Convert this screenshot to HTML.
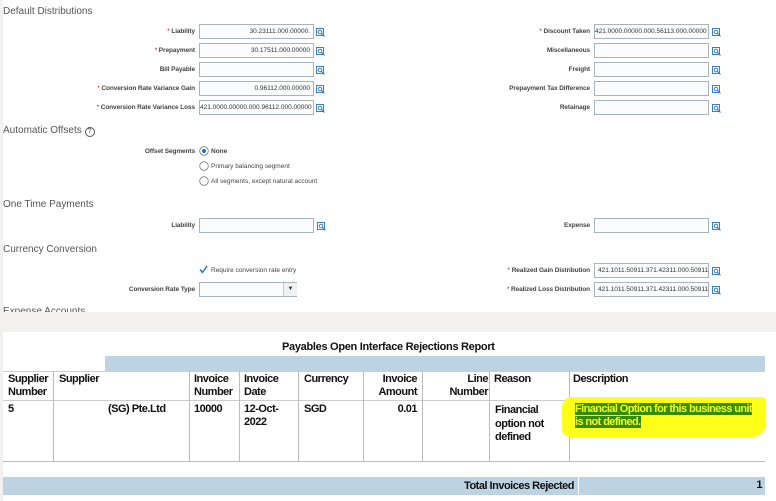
<!DOCTYPE html>
<html><head><meta charset="utf-8"><style>
*{margin:0;padding:0;box-sizing:border-box}
body{width:776px;height:501px;overflow:hidden;background:#fff;font-family:"Liberation Sans",Arial,sans-serif;position:relative;color:#333}
.a{position:absolute;white-space:nowrap}
.h{font-size:10px;color:#555}
.l{font-size:6.5px;color:#444;text-align:right;width:190px;font-weight:bold;letter-spacing:-0.1px}
.l b{color:#c00;font-weight:normal}
.in{position:absolute;height:15px;border:1px solid #a8b4bd;background:#fbfcfd;font-size:6.5px;color:#333;text-align:right;padding:3px 3px 0 0;overflow:hidden}
.ic{position:absolute;width:9px;height:9px}
.strip{position:absolute;left:0;top:0;width:3px;height:312px;background:#f2f1ef}
.rt{font-size:11px;color:#111;letter-spacing:-0.5px}
</style></head><body>
<div class="strip"></div>
<div class="a h" style="left:3px;top:6px">Default Distributions</div>

<svg width="0" height="0" style="position:absolute"><defs><symbol id="mg" viewBox="0 0 9 9"><rect x="0.5" y="0.5" width="7" height="7" fill="none" stroke="#3a7fc4"/><circle cx="4" cy="4" r="1.8" fill="none" stroke="#3a7fc4"/><path d="M5.3 5.3L8.5 8.5" stroke="#3a7fc4" stroke-width="1.2"/></symbol></defs></svg>

<div class="a l" style="left:5px;top:28px"><b>*</b> Liability</div>
<div class="in" style="left:199px;top:24px;width:115px">30.23111.000.00000.</div>
<svg class="ic" style="left:316px;top:28px"><use href="#mg"/></svg>
<div class="a l" style="left:5px;top:47px"><b>*</b> Prepayment</div>
<div class="in" style="left:199px;top:43px;width:115px">30.17511.000.00000</div>
<svg class="ic" style="left:316px;top:47px"><use href="#mg"/></svg>
<div class="a l" style="left:5px;top:66px">Bill Payable</div>
<div class="in" style="left:199px;top:62px;width:115px"></div>
<svg class="ic" style="left:316px;top:66px"><use href="#mg"/></svg>
<div class="a l" style="left:5px;top:85px"><b>*</b> Conversion Rate Variance Gain</div>
<div class="in" style="left:199px;top:81px;width:115px">0.96112.000.00000</div>
<svg class="ic" style="left:316px;top:85px"><use href="#mg"/></svg>
<div class="a l" style="left:5px;top:104px"><b>*</b> Conversion Rate Variance Loss</div>
<div class="in" style="left:199px;top:100px;width:115px">421.0000.00000.000.96112.000.00000</div>
<svg class="ic" style="left:316px;top:104px"><use href="#mg"/></svg>

<div class="a l" style="left:400px;top:28px"><b>*</b> Discount Taken</div>
<div class="in" style="left:594px;top:24px;width:115px">421.0000.00000.000.56113.000.00000</div>
<svg class="ic" style="left:712px;top:28px"><use href="#mg"/></svg>
<div class="a l" style="left:400px;top:47px">Miscellaneous</div>
<div class="in" style="left:594px;top:43px;width:115px"></div>
<svg class="ic" style="left:712px;top:47px"><use href="#mg"/></svg>
<div class="a l" style="left:400px;top:66px">Freight</div>
<div class="in" style="left:594px;top:62px;width:115px"></div>
<svg class="ic" style="left:712px;top:66px"><use href="#mg"/></svg>
<div class="a l" style="left:400px;top:85px">Prepayment Tax Difference</div>
<div class="in" style="left:594px;top:81px;width:115px"></div>
<svg class="ic" style="left:712px;top:85px"><use href="#mg"/></svg>
<div class="a l" style="left:400px;top:104px">Retainage</div>
<div class="in" style="left:594px;top:100px;width:115px"></div>
<svg class="ic" style="left:712px;top:104px"><use href="#mg"/></svg>

<div class="a h" style="left:3px;top:125px">Automatic Offsets <span style="display:inline-block;width:10px;height:10px;border:1px solid #555;border-radius:50%;font-size:7px;text-align:center;line-height:8px">?</span></div>
<div class="a l" style="left:5px;top:148px">Offset Segments</div>
<svg class="a" style="left:199px;top:146px" width="10" height="10"><circle cx="5" cy="5" r="4.3" fill="#fff" stroke="#777" stroke-width=".8"/><circle cx="5" cy="5" r="2" fill="#1a73c8"/></svg>
<div class="a" style="left:211px;top:148px;font-size:6.5px;color:#444;font-weight:bold">None</div>
<svg class="a" style="left:199px;top:161px" width="10" height="10"><circle cx="5" cy="5" r="4.3" fill="#fff" stroke="#777" stroke-width=".8"/></svg>
<div class="a" style="left:211px;top:163px;font-size:6.5px;color:#444">Primary balancing segment</div>
<svg class="a" style="left:199px;top:176px" width="10" height="10"><circle cx="5" cy="5" r="4.3" fill="#fff" stroke="#777" stroke-width=".8"/></svg>
<div class="a" style="left:211px;top:178px;font-size:6.5px;color:#444">All segments, except natural account</div>

<div class="a h" style="left:3px;top:199px">One Time Payments</div>
<div class="a l" style="left:5px;top:222px">Liability</div>
<div class="in" style="left:199px;top:218px;width:115px"></div>
<svg class="ic" style="left:317px;top:222px"><use href="#mg"/></svg>
<div class="a l" style="left:400px;top:222px">Expense</div>
<div class="in" style="left:594px;top:218px;width:115px"></div>
<svg class="ic" style="left:712px;top:222px"><use href="#mg"/></svg>

<div class="a h" style="left:3px;top:244px">Currency Conversion</div>
<svg class="a" style="left:199px;top:265px" width="9" height="9"><path d="M1 4.5L3.5 7.5L8 1" fill="none" stroke="#1a73c8" stroke-width="1.4"/></svg>
<div class="a" style="left:211px;top:267px;font-size:6.5px;color:#444">Require conversion rate entry</div>
<div class="a l" style="left:5px;top:286px">Conversion Rate Type</div>
<div class="in" style="left:199px;top:282px;width:98px"></div>
<div class="a" style="left:283px;top:283px;width:14px;height:13px;border-left:1px solid #ccc;background:#f0f0f0;font-size:6px;text-align:center;line-height:13px">▼</div>
<div class="a l" style="left:400px;top:267px"><b>*</b> Realized Gain Distribution</div>
<div class="in" style="left:594px;top:263px;width:115px;text-align:left;padding-left:3px">421.1011.50911.371.42311.000.50911.</div>
<svg class="ic" style="left:712px;top:267px"><use href="#mg"/></svg>
<div class="a l" style="left:400px;top:286px"><b>*</b> Realized Loss Distribution</div>
<div class="in" style="left:594px;top:282px;width:115px;text-align:left;padding-left:3px">421.1011.50911.371.42311.000.50911.</div>
<svg class="ic" style="left:712px;top:286px"><use href="#mg"/></svg>
<div class="a h" style="left:3px;top:306px;height:6px;overflow:hidden">Expense Accounts</div>

<div class="a" style="left:0;top:312px;width:776px;height:20px;background:#f2f1ef"></div>
<div class="a" style="left:0;top:332px;width:3px;height:169px;background:#f2f1ef"></div>

<div class="a rt" style="left:282px;top:341px;font-size:11px;font-weight:bold;letter-spacing:-0.3px">Payables Open Interface Rejections Report</div>
<div class="a" style="left:105px;top:356px;width:660px;height:15px;background:#bdd2e3"></div>
<div class="a" style="left:3px;top:371px;width:762px;height:91px;border-top:1px solid #ccd;border-bottom:1px solid #bbb"></div>
<div class="a" style="left:3px;top:400px;width:762px;height:1px;background:#ccc"></div>
<div class="a" style="left:53px;top:371px;width:1px;height:91px;background:#bbb"></div>
<div class="a" style="left:189px;top:371px;width:1px;height:91px;background:#bbb"></div>
<div class="a" style="left:239px;top:371px;width:1px;height:91px;background:#bbb"></div>
<div class="a" style="left:298px;top:371px;width:1px;height:91px;background:#bbb"></div>
<div class="a" style="left:363px;top:371px;width:1px;height:91px;background:#bbb"></div>
<div class="a" style="left:422px;top:371px;width:1px;height:91px;background:#bbb"></div>
<div class="a" style="left:489px;top:371px;width:1px;height:91px;background:#bbb"></div>
<div class="a" style="left:569px;top:371px;width:1px;height:91px;background:#bbb"></div>

<div class="a rt" style="left:8px;top:373px;line-height:13px;font-weight:bold">Supplier<br>Number</div>
<div class="a rt" style="left:59px;top:373px;font-weight:bold">Supplier</div>
<div class="a rt" style="left:194px;top:373px;line-height:13px;font-weight:bold">Invoice<br>Number</div>
<div class="a rt" style="left:244px;top:373px;line-height:13px;font-weight:bold">Invoice<br>Date</div>
<div class="a rt" style="left:304px;top:373px;font-weight:bold">Currency</div>
<div class="a rt" style="left:363px;top:373px;width:54px;text-align:right;line-height:13px;font-weight:bold">Invoice<br>Amount</div>
<div class="a rt" style="left:422px;top:373px;width:66px;text-align:right;line-height:13px;font-weight:bold">Line<br>Number</div>
<div class="a rt" style="left:494px;top:373px;font-weight:bold">Reason</div>
<div class="a rt" style="left:573px;top:373px;font-weight:bold">Description</div>

<div class="a rt" style="left:8px;top:403px;font-weight:bold">5</div>
<div class="a rt" style="left:108px;top:403px;font-weight:bold">(SG) Pte.Ltd</div>
<div class="a rt" style="left:194px;top:403px;font-weight:bold">10000</div>
<div class="a rt" style="left:244px;top:403px;line-height:13px;font-weight:bold">12-Oct-<br>2022</div>
<div class="a rt" style="left:304px;top:403px;font-weight:bold">SGD</div>
<div class="a rt" style="left:363px;top:403px;width:54px;text-align:right;font-weight:bold">0.01</div>
<div class="a rt" style="left:495px;top:404px;line-height:13.5px;font-weight:bold">Financial<br>option not<br>defined</div>
<div class="a" style="left:562px;top:397px;width:204px;height:40px;background:#ffff1a;border-radius:10px 4px 14px 8px"></div>
<div class="a rt" style="left:575px;top:403px;line-height:13px;font-weight:bold;color:#e8ff2a;letter-spacing:-0.6px"><span style="background:#3a8a00">Financial Option for this business unit</span><br><span style="background:#3a8a00">is not defined.</span></div>

<div class="a" style="left:3px;top:477px;width:762px;height:18px;background:#bdd2e3"></div>
<div class="a" style="left:578px;top:477px;width:1px;height:18px;background:#fff"></div>
<div class="a rt" style="left:300px;top:480px;width:274px;text-align:right;font-weight:bold">Total Invoices Rejected</div>
<div class="a rt" style="left:700px;top:479px;width:62px;text-align:right;font-weight:bold">1</div>
</body></html>
